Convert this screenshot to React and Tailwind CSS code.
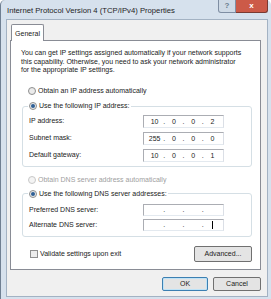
import React from 'react';

// Win7 style radio
function Radio({ checked, disabled }) {
  return (
    <span
      className={
        'flex h-[8px] w-[8px] shrink-0 items-center justify-center rounded-full border ' +
        (disabled ? 'border-[#c8c8c8] bg-[#f4f4f4]' : 'border-[#8e8f8f] bg-[#ebebeb]')
      }
    >
      {checked && <span className="h-[4px] w-[4px] rounded-full bg-[#2f5f95]" />}
    </span>
  );
}

function IpBox({ values = ['', '', '', ''], cursor }) {
  return (
    <div className="flex h-[12.5px] w-[81px] items-center border border-[#abadb3] border-b-[#e3e9ef] border-r-[#dbdfe6] bg-white px-[2px] text-[7px] leading-none text-[#222]">
      {values.map((v, i) => (
        <React.Fragment key={i}>
          <span className="flex flex-1 justify-center">
            {cursor && i === 3 ? <span className="inline-block h-[8px] w-px bg-black" /> : v}
          </span>
          {i < 3 && <span className="w-[2px] text-center">.</span>}
        </React.Fragment>
      ))}
    </div>
  );
}

function Row({ label, children }) {
  return (
    <div className="flex items-center">
      <span className="ml-[1px] w-[114px] text-[#222]">{label}</span>
      {children}
    </div>
  );
}

function Button({ children, width, def }) {
  return (
    <div
      className={
        'flex items-center justify-center rounded-[2px] border bg-[#e4e4e4] text-[#222] ' +
        (def ? 'border-[#3c7fb1] shadow-[inset_0_0_0_1px_#bfe3f7]' : 'border-[#707070]') +
        ' ' + width
      }
    >
      {children}
    </div>
  );
}

export default function App() {
  return (
    <div className="h-[299px] w-[271px] overflow-hidden bg-white font-['Liberation_Sans',Arial,sans-serif] text-[7px] leading-[8px]">
      <div className="flex h-[299px] w-[271px] flex-col rounded-t-[5px] border-l border-[#6f7f92] bg-[#d6e1ed]">
        {/* title bar */}
        <div className="flex h-[19px] shrink-0 items-start">
          <div className="shrink-0 pl-[6px] pt-[7px] text-[7.7px] leading-[8px] text-[#1e1e1e]">
            Internet Protocol Version 4 (TCP/IPv4) Properties
          </div>
          <div className="flex-1" />
          <div className="mr-[3px] flex h-[13px] w-[50px] shrink-0">
            <div className="flex h-[13px] w-[18px] items-center justify-center rounded-bl-[3px] border border-t-0 border-[#7f8ea3] bg-[#cfdae6] text-[8px] font-bold leading-none text-[#6a7a8e]">
              ?
            </div>
            <div className="flex h-[13px] w-[32px] items-center justify-center rounded-br-[3px] border border-l-0 border-t-0 border-[#7a3a32] bg-[#cc5a48] text-[8px] font-bold leading-none text-white">
              x
            </div>
          </div>
        </div>

        {/* client area */}
        <div className="ml-[5px] mr-[3px] flex h-[278px] flex-col border border-[#a3b2c3] bg-[#f0f0f0] pl-[3px] pt-[3px]">
          {/* tab */}
          <div className="flex h-[17px] shrink-0 items-end">
            <div className="relative z-10 -mb-px ml-[1px] flex h-[17px] w-[33px] items-center justify-center rounded-t-[2px] border border-b-0 border-[#898c95] bg-white pt-[1px] text-[#222]">
              General
            </div>
          </div>

          {/* tab panel */}
          <div className="flex h-[230px] w-[251px] shrink-0 flex-col border border-[#898c95] bg-white pl-[10px] pr-[8px]">
            <p className="whitespace-nowrap pt-[8px] leading-[8.5px] text-[#222]">
              You can get IP settings assigned automatically if your network supports
              <br />
              this capability. Otherwise, you need to ask your network administrator
              <br />
              for the appropriate IP settings.
            </p>

            <div className="ml-[7px] mt-[12.5px] flex h-[8px] items-center gap-[2px] text-[#222]">
              <Radio />
              <span>Obtain an IP address automatically</span>
            </div>

            <fieldset className="ml-[1px] mt-[7px] rounded-[3px] border border-[#d5dfe5] px-[5px] pb-[4px]">
              <legend className="flex h-[8px] items-center gap-[2px] bg-white px-[1px] text-[#222]">
                <Radio checked />
                <span>Use the following IP address:</span>
              </legend>
              <div className="flex flex-col gap-[4.5px] pt-[5px]">
                <Row label="IP address:">
                  <IpBox values={['10', '0', '0', '2']} />
                </Row>
                <Row label="Subnet mask:">
                  <IpBox values={['255', '0', '0', '0']} />
                </Row>
                <Row label="Default gateway:">
                  <IpBox values={['10', '0', '0', '1']} />
                </Row>
              </div>
            </fieldset>

            <div className="ml-[7px] mt-[9px] flex h-[8px] items-center gap-[2px] text-[#a0a0a0]">
              <Radio disabled />
              <span>Obtain DNS server address automatically</span>
            </div>

            <fieldset className="ml-[1px] mt-[6px] rounded-[3px] border border-[#d5dfe5] px-[5px] pb-[5px]">
              <legend className="flex h-[8px] items-center gap-[2px] bg-white px-[1px] text-[#222]">
                <Radio checked />
                <span>Use the following DNS server addresses:</span>
              </legend>
              <div className="flex flex-col gap-[2.5px] pt-[6px]">
                <Row label="Preferred DNS server:">
                  <IpBox />
                </Row>
                <Row label="Alternate DNS server:">
                  <IpBox cursor />
                </Row>
              </div>
            </fieldset>

            <div className="mt-[9px] flex h-[16px] items-center">
              <span className="ml-[9px] h-[8px] w-[8px] border border-[#8f8f8f] bg-[#ececec]" />
              <span className="ml-[2px] text-[#222]">Validate settings upon exit</span>
              <div className="ml-auto flex h-[16px]">
                <Button width="w-[58px]">Advanced...</Button>
              </div>
            </div>
          </div>

          {/* dialog buttons */}
          <div className="mt-[7px] flex h-[14px] w-[251px] justify-end gap-[5px]">
            <Button width="w-[46px]" def>OK</Button>
            <Button width="w-[48px]">Cancel</Button>
          </div>
        </div>
      </div>
    </div>
  );
}
